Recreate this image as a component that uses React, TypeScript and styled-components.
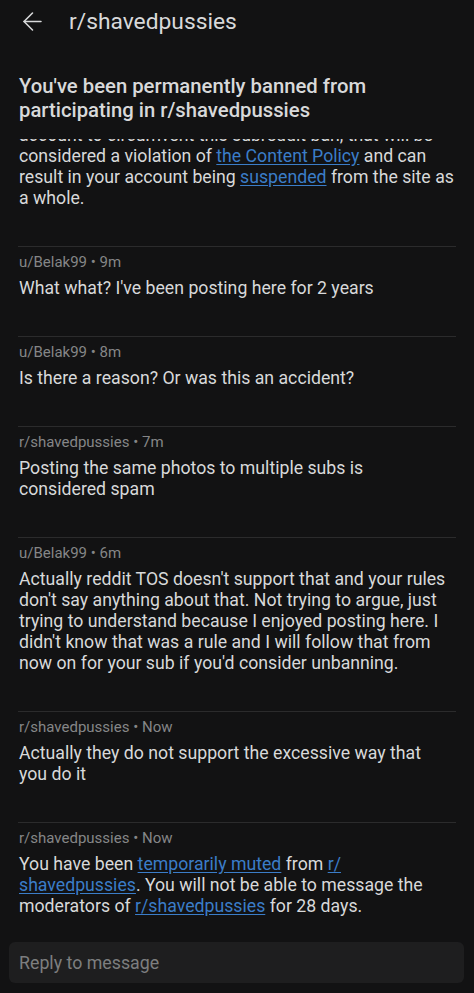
import React from 'react';
import styled, { createGlobalStyle } from 'styled-components';
import { ArrowLeft } from 'lucide-react';

const GlobalStyle = createGlobalStyle`
  html, body {
    margin: 0;
    padding: 0;
    background: #121213;
  }
  body {
    font-family: Roboto, "Noto Sans", "Liberation Sans", sans-serif;
    color: #d8d9da;
    -webkit-font-smoothing: antialiased;
  }
`;

const Page = styled.div`
  height: 100vh;
  display: flex;
  flex-direction: column;
  overflow: hidden;
`;

const Header = styled.header`
  height: 42px;
  display: flex;
  align-items: center;
  padding-left: 18px;
  gap: 22px;
  flex-shrink: 0;
`;

const BackButton = styled.button`
  background: none;
  border: none;
  padding: 0;
  display: flex;
  color: #d8d9da;
`;

const HeaderTitle = styled.div`
  font-size: 22.8px;
  font-weight: 400;
  color: #d8d9da;
`;

const Subject = styled.h1`
  margin: 32px 19px 0;
  font-size: 20.3px;
  line-height: 24px;
  font-weight: 500;
  color: #d8d9da;
  flex-shrink: 0;
`;

const Thread = styled.div`
  flex: 1;
  overflow: hidden;
  margin-top: 17px;
  padding: 0 18px;
`;

// thread is scrolled a little, first line is cut off under the subject
const ThreadInner = styled.div`
  margin-top: -20px;
`;

const FirstMessage = styled.div`
  padding-bottom: 37px;
`;

const Message = styled.div`
  border-top: 1px solid #2b2b2c;
  padding: 5px 0 37px;
`;

const Meta = styled.div`
  font-size: 15px;
  line-height: 20px;
  color: #858687;
  padding-left: 1px;
`;

const Body = styled.p<{ $inset?: boolean }>`
  margin: 6px 0 0;
  padding-left: 1px;
  padding-right: ${(p) => (p.$inset ? '9px' : '0')};
  font-size: 17.7px;
  line-height: 21px;
  color: #d8d9da;
`;

const Link = styled.a`
  color: #3b7dc8;
  text-decoration: underline;
  text-underline-offset: 2px;
`;

const Footer = styled.div`
  flex-shrink: 0;
  padding: 5px 10px 10px 9px;
  background: #121213;
`;

const ReplyBox = styled.div`
  height: 41px;
  border-radius: 6px;
  background: #1e1e1f;
  display: flex;
  align-items: center;
  padding-left: 10px;
  font-size: 17.8px;
  color: #7d7e7f;
`;

interface Msg {
  author: string;
  time: string;
  body: React.ReactNode;
}

const messages: Msg[] = [
  { author: 'u/Belak99', time: '9m', body: "What what? I've been posting here for 2 years" },
  { author: 'u/Belak99', time: '8m', body: 'Is there a reason? Or was this an accident?' },
  { author: 'r/shavedpussies', time: '7m', body: 'Posting the same photos to multiple subs is considered spam' },
  {
    author: 'u/Belak99',
    time: '6m',
    body:
      "Actually reddit TOS doesn't support that and your rules don't say anything about that. Not trying to argue, just trying to understand because I enjoyed posting here. I didn't know that was a rule and I will follow that from now on for your sub if you'd consider unbanning.",
  },
  { author: 'r/shavedpussies', time: 'Now', body: 'Actually they do not support the excessive way that you do it' },
  {
    author: 'r/shavedpussies',
    time: 'Now',
    body: (
      <>
        You have been <Link>temporarily muted</Link> from{' '}
        <Link>
          r/<wbr />
          shavedpussies
        </Link>
        . You will not be able to message the moderators of <Link>r/shavedpussies</Link> for 28 days.
      </>
    ),
  },
];

const App: React.FC = () => {
  return (
    <>
      <GlobalStyle />
      <Page>
        <Header>
          <BackButton aria-label="Back">
            <ArrowLeft size={29} strokeWidth={1.3} />
          </BackButton>
          <HeaderTitle>r/shavedpussies</HeaderTitle>
        </Header>

        <Subject>You've been permanently banned from participating in r/shavedpussies</Subject>

        <Thread>
          <ThreadInner>
            <FirstMessage>
              <Body>
                account to circumvent this subreddit ban, that will be considered a violation of{' '}
                <Link>the Content Policy</Link> and can result in your account being <Link>suspended</Link> from the
                site as a whole.
              </Body>
            </FirstMessage>
            {messages.map((m, i) => (
              <Message key={i}>
                <Meta>
                  {m.author} • {m.time}
                </Meta>
                <Body $inset>{m.body}</Body>
              </Message>
            ))}
          </ThreadInner>
        </Thread>

        <Footer>
          <ReplyBox>Reply to message</ReplyBox>
        </Footer>
      </Page>
    </>
  );
};

export default App;
